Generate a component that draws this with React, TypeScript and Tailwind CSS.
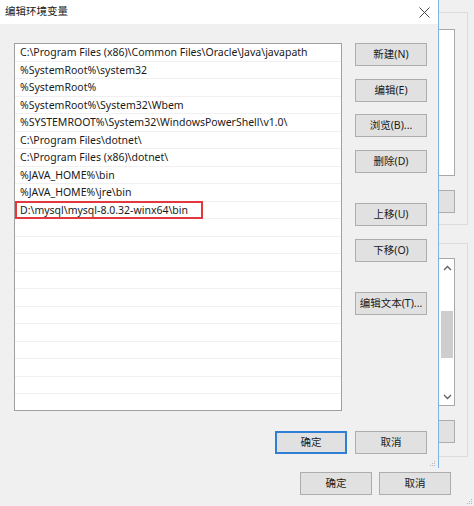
import React from "react";

const paths = [
  "C:\\Program Files (x86)\\Common Files\\Oracle\\Java\\javapath",
  "%SystemRoot%\\system32",
  "%SystemRoot%",
  "%SystemRoot%\\System32\\Wbem",
  "%SYSTEMROOT%\\System32\\WindowsPowerShell\\v1.0\\",
  "C:\\Program Files\\dotnet\\",
  "C:\\Program Files (x86)\\dotnet\\",
  "%JAVA_HOME%\\bin",
  "%JAVA_HOME%\\jre\\bin",
  "D:\\mysql\\mysql-8.0.32-winx64\\bin",
];

const font = { fontFamily: '"Noto Sans", "Noto Sans CJK SC", sans-serif' };

function Btn({ label, className = "", primary = false }: { label: string; className?: string; primary?: boolean }) {
  return (
    <div
      className={
        "flex h-[23px] w-[72px] shrink-0 items-center justify-center whitespace-nowrap bg-[#e1e1e1] text-[10.5px] text-[#1a1a1a] " +
        (primary ? "border-2 border-[#2f7fd3] " : "border border-[#adadad] ") +
        className
      }
    >
      {label}
    </div>
  );
}

function Grip() {
  return (
    <svg width="7" height="7" viewBox="0 0 7 7" className="block">
      <rect x="5" y="1" width="1" height="1" fill="#b8b8b8" />
      <rect x="3" y="3" width="1" height="1" fill="#b8b8b8" />
      <rect x="5" y="3" width="1" height="1" fill="#b8b8b8" />
      <rect x="1" y="5" width="1" height="1" fill="#b8b8b8" />
      <rect x="3" y="5" width="1" height="1" fill="#b8b8b8" />
      <rect x="5" y="5" width="1" height="1" fill="#b8b8b8" />
    </svg>
  );
}

function BackWindow() {
  return (
    <div className="flex h-[506px] w-[474px] flex-col bg-[#f0f0f0]">
      <div className="flex justify-end pr-[6px]">
        <div className="flex w-[60px] flex-col">
          {/* group 1 */}
          <div className="mt-[12px] flex h-[213px] flex-col items-end border border-[#dcdcdc] pr-[12px] pt-[16px]">
            <div className="h-[147px] w-[40px] border border-[#a9a9a9] bg-white" />
            <div className="mt-[14px] h-[23px] w-[40px] border border-[#adadad] bg-[#e1e1e1]" />
          </div>
          {/* group 2 */}
          <div className="mt-[18px] flex h-[214px] flex-col items-end border border-[#dcdcdc] pr-[12px] pt-[14px]">
            <div className="flex h-[148px] w-[40px] flex-col items-end border border-[#a9a9a9] bg-white">
              <div className="flex w-[14px] flex-1 flex-col items-center">
                <svg width="9" height="6" viewBox="0 0 9 6" className="mt-[6px]">
                  <path d="M1 5 L4.5 1.5 L8 5" stroke="#606060" strokeWidth="1.3" fill="none" />
                </svg>
                <div className="mt-[40px] h-[47px] w-[12px] bg-[#cdcdcd]" />
                <div className="flex-1" />
                <svg width="9" height="6" viewBox="0 0 9 6" className="mb-[5px]">
                  <path d="M1 1 L4.5 4.5 L8 1" stroke="#606060" strokeWidth="1.3" fill="none" />
                </svg>
              </div>
            </div>
            <div className="mt-[14px] h-[23px] w-[40px] border border-[#adadad] bg-[#e1e1e1]" />
          </div>
        </div>
      </div>
      <div className="mt-[15px] flex justify-end gap-[7px] pr-[23px]">
        <Btn label="确定" />
        <Btn label="取消" />
      </div>
      <div className="flex flex-1 items-end justify-end pr-[1px] pb-[1px]">
        <Grip />
      </div>
    </div>
  );
}

function Dialog() {
  return (
    <div className="absolute left-0 top-0 flex h-[468px] w-[439px] flex-col border-r border-[#7db3e8] bg-[#f0f0f0]">
      <div className="flex h-[24px] items-center justify-between bg-white pl-[5px] pr-[8px]">
        <span className="text-[10.5px] text-[#1a1a1a]">编辑环境变量</span>
        <svg width="11" height="11" viewBox="0 0 11 11">
          <path d="M0.5 0.5 L10.5 10.5 M10.5 0.5 L0.5 10.5" stroke="#444" strokeWidth="1" />
        </svg>
      </div>
      <div className="flex pl-[14px] pt-[19px]">
        <div className="flex h-[368px] w-[328px] flex-col overflow-hidden border border-[#a0a0a0] bg-white">
          {Array.from({ length: 21 }).map((_, i) => (
            <div
              key={i}
              className="relative flex h-[17.5px] shrink-0 items-center whitespace-nowrap border-b border-[#f0f0f0] pl-[5px] text-[10.5px] leading-none text-[#1a1a1a]"
            >
              {paths[i] ?? ""}
              {i === 9 && (
                <div className="absolute left-0 top-[-1px] h-[18px] w-[188px] border-2 border-[#e2393f]" />
              )}
            </div>
          ))}
        </div>
        <div className="ml-[13px] flex flex-col">
          <Btn label="新建(N)" />
          <Btn label="编辑(E)" className="mt-[13px]" />
          <Btn label="浏览(B)..." className="mt-[12px]" />
          <Btn label="删除(D)" className="mt-[13px]" />
          <Btn label="上移(U)" className="mt-[30px]" />
          <Btn label="下移(O)" className="mt-[13px]" />
          <Btn label="编辑文本(T)..." className="mt-[30px]" />
        </div>
      </div>
      <div className="mt-[20px] flex justify-end gap-[8px] pr-[11px]">
        <Btn label="确定" primary className="w-[71px]" />
        <Btn label="取消" />
      </div>
      <div className="flex flex-1 items-end justify-end pr-[2px] pb-[1px]">
        <Grip />
      </div>
    </div>
  );
}

export default function App() {
  return (
    <div className="relative h-[506px] w-[474px] overflow-hidden" style={font}>
      <BackWindow />
      <Dialog />
    </div>
  );
}
